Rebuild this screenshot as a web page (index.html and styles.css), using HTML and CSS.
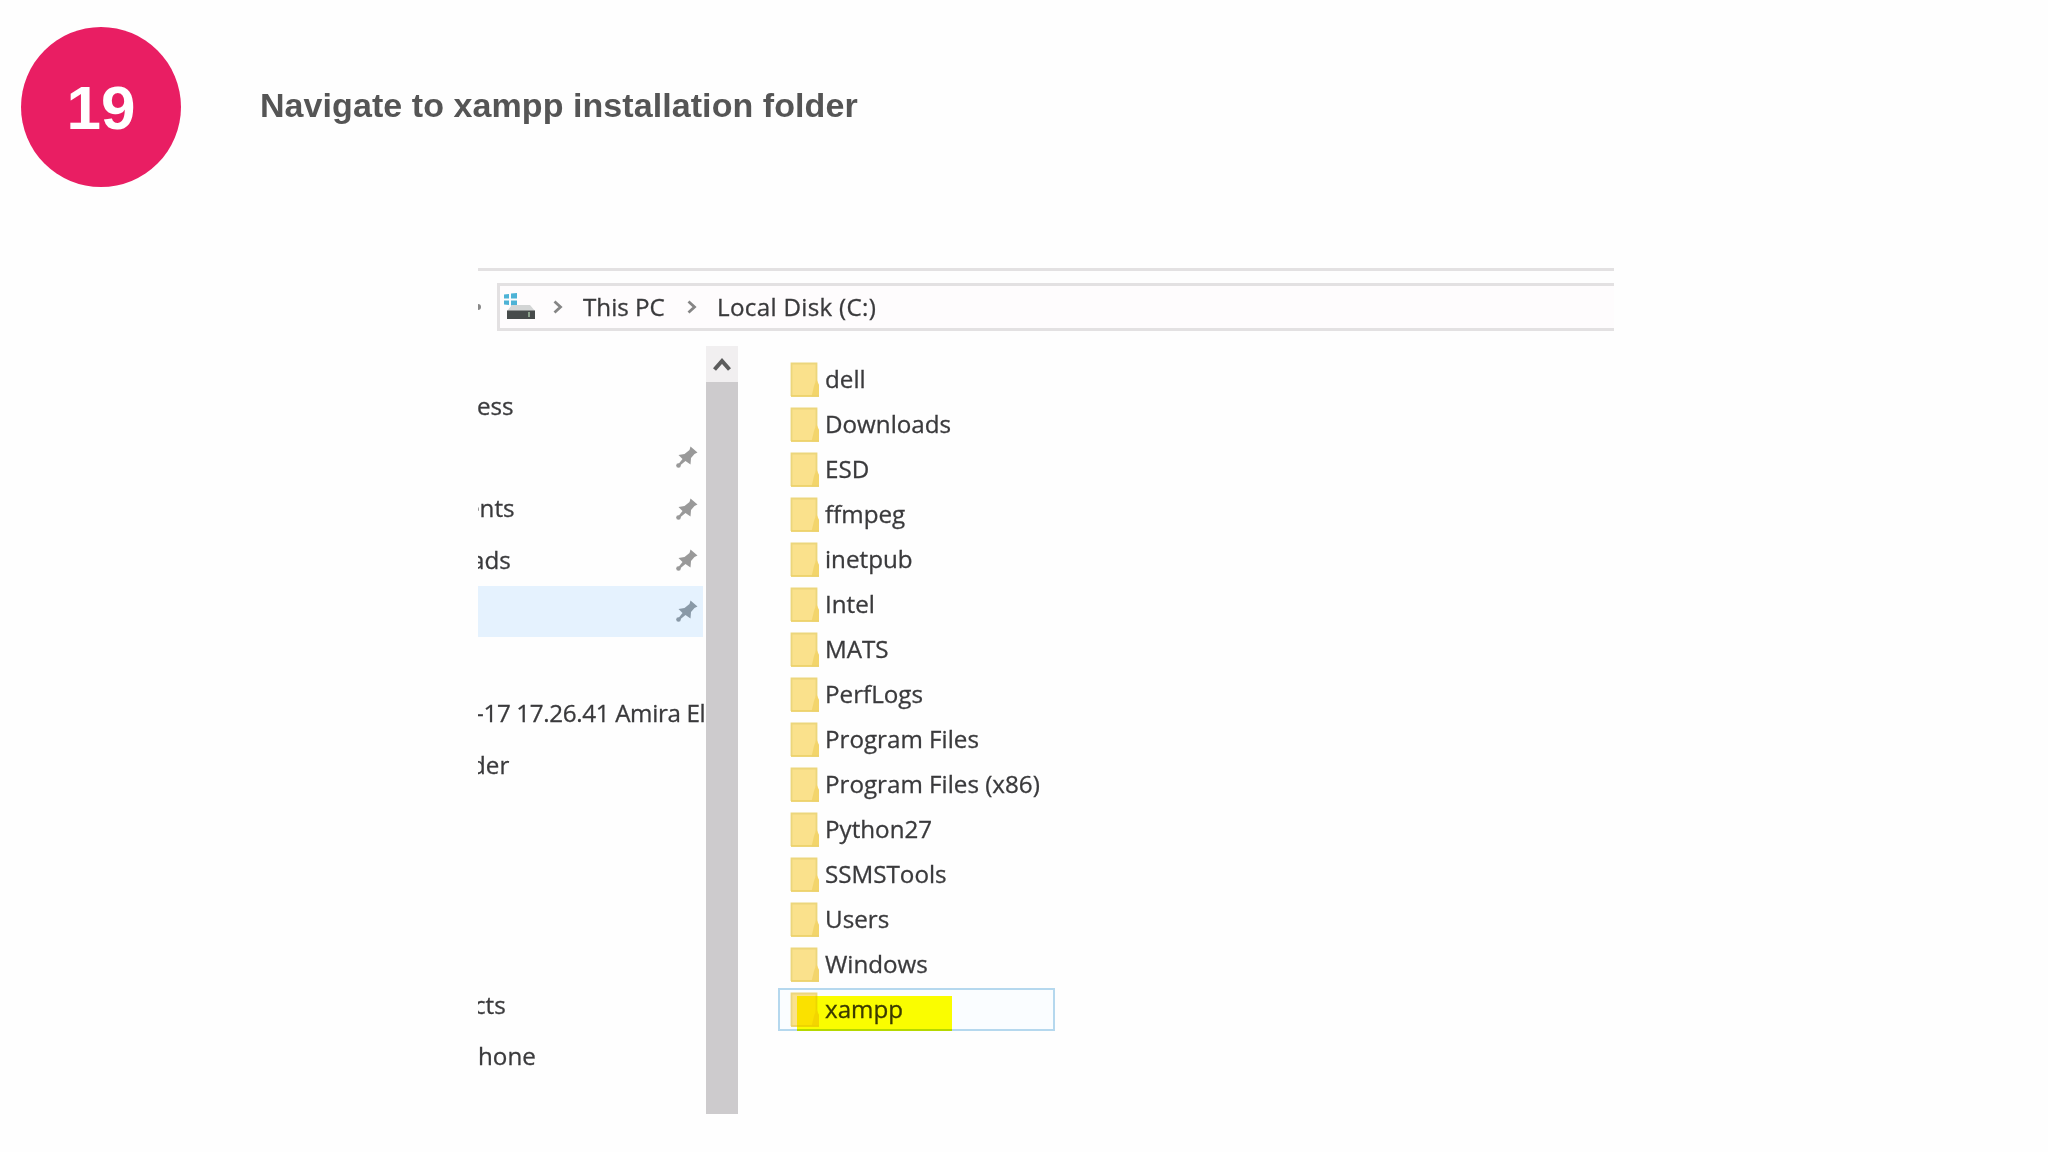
FILE: index.html
```
<!DOCTYPE html>
<html lang="en">

<head>
    <meta charset="UTF-8">
    <meta name="viewport" content="width=device-width, initial-scale=1.0">
    <title>Navigate to xampp installation folder</title>
    <link rel="stylesheet" href="styles.css">
</head>

<body>
    <!-- shared icons -->
    <svg class="sprite" width="0" height="0">
        <symbol id="pin" viewBox="0 0 22 22">
            <path d="M14.500 0.500L21.500 6.500L18.500 8L15 12L14.500 18.500L9.500 15L4 19.500L2.500 18L6.500 13L2.500 9L8.500 8L13.500 4Z" fill="currentColor" />
            <circle cx="2.500" cy="19.500" r="2.300" fill="currentColor" />
        </symbol>
        <symbol id="folder" viewBox="0 0 30 36">
            <path d="M1 1H27V21L29 23V34H1Z" fill="#fae18c" />
            <path d="M1.500 34V1.500H26.500V20" fill="none" stroke="#ecd67c" stroke-width="1.800" />
            <path d="M26.500 17L29 23V34.500H21.500L24 24Z" fill="#f3d56c" />
            <path d="M1 34H29" stroke="#ecd26a" stroke-width="1.800" />
        </symbol>
        <symbol id="arrow" viewBox="0 0 10 14">
            <path d="M1.500 1.500L7.500 7L1.500 12.500" fill="none" stroke="#858585" stroke-width="2.800" />
        </symbol>
    </svg>

    <header class="header">
        <div class="num">19</div>
        <h1 class="title">Navigate to xampp installation folder</h1>
    </header>

    <main class="explorer">
        <div class="address">
            <i class="dot"></i>
            <div class="path">
                <svg class="disk" width="34" height="28" viewBox="0 0 34 28">
                    <path d="M1 2.500L6 2V6.500H1ZM8 1.500L14 1V6.500H8ZM1 8.500H6V13L1 12.500ZM8 8.500H14V14L8 13.500Z" fill="#4db3d6" />
                    <path d="M9 13H27L32 19H4Z" fill="#d3d5d5" />
                    <path d="M4 18.500H32V27H4Z" fill="#474b4b" />
                    <path d="M26 20V25" stroke="#8aa08a" stroke-width="2" />
                </svg>
                <svg class="arrow" width="10" height="14"><use href="#arrow" /></svg>
                <span class="pc">This PC</span>
                <svg class="arrow" width="10" height="14"><use href="#arrow" /></svg>
                <span class="drive">Local Disk (C:)</span>
            </div>
        </div>

        <div class="content">
            <ul class="side">
                <li><span class="ess">ess</span></li>
                <li><svg class="pin"><use href="#pin" /></svg></li>
                <li><span class="ents">ents</span><svg class="pin"><use href="#pin" /></svg></li>
                <li><span class="ads">ads</span><svg class="pin"><use href="#pin" /></svg></li>
                <li class="active"><svg class="pin"><use href="#pin" /></svg></li>
                <li></li>
                <li><span class="rec">-17 17.26.41 Amira El</span></li>
                <li><span class="der">der</span></li>
                <li class="space"></li>
                <li><span class="cts">cts</span></li>
                <li><span class="hone">hone</span></li>
            </ul>

            <div class="scroll">
                <div class="up">
                    <svg width="18" height="14" viewBox="0 0 18 14">
                        <path d="M1.500 12.500L9 4L16.500 12.500" fill="none" stroke="#5c5c5c" stroke-width="4" />
                    </svg>
                </div>
                <div class="thumb"></div>
            </div>

            <ul class="files">
                <li><svg class="folder"><use href="#folder" /></svg><span>dell</span></li>
                <li><svg class="folder"><use href="#folder" /></svg><span>Downloads</span></li>
                <li><svg class="folder"><use href="#folder" /></svg><span>ESD</span></li>
                <li><svg class="folder"><use href="#folder" /></svg><span>ffmpeg</span></li>
                <li><svg class="folder"><use href="#folder" /></svg><span>inetpub</span></li>
                <li><svg class="folder"><use href="#folder" /></svg><span>Intel</span></li>
                <li><svg class="folder"><use href="#folder" /></svg><span>MATS</span></li>
                <li><svg class="folder"><use href="#folder" /></svg><span>PerfLogs</span></li>
                <li><svg class="folder"><use href="#folder" /></svg><span>Program Files</span></li>
                <li><svg class="folder"><use href="#folder" /></svg><span>Program Files (x86)</span></li>
                <li><svg class="folder"><use href="#folder" /></svg><span>Python27</span></li>
                <li><svg class="folder"><use href="#folder" /></svg><span>SSMSTools</span></li>
                <li><svg class="folder"><use href="#folder" /></svg><span>Users</span></li>
                <li><svg class="folder"><use href="#folder" /></svg><span>Windows</span></li>
                <li class="selected"><svg class="folder"><use href="#folder" /></svg><span>xampp</span><i class="marker"></i></li>
            </ul>
        </div>
    </main>
</body>

</html>
```
FILE: styles.css
```
* {
    box-sizing: border-box;
}

body {
    margin: 0;
    height: 1152px;
    overflow: hidden;
    background: #fefefe;
}

ul {
    margin: 0;
    padding: 0;
    list-style: none;
}

svg {
    display: block;
    flex-shrink: 0;
}

.sprite {
    position: absolute;
}

.header {
    display: flex;
    align-items: center;
    height: 268px;
    padding: 27px 0 81px 21px;
    font-family: "Liberation Sans", Arial, sans-serif;
}

.num {
    width: 160px;
    height: 160px;
    border-radius: 50%;
    background: #e91e63;
    color: #fff;
    font-size: 62px;
    font-weight: bold;
    line-height: 162px;
    text-align: center;
}

.title {
    margin: 0 0 5px 79px;
    color: #555;
    font-size: 34px;
    font-weight: bold;
    line-height: 40px;
    letter-spacing: 0.070px;
    white-space: nowrap;
}

.explorer {
    width: 1136px;
    height: 846px;
    margin-left: 478px;
    border-top: 3px solid #e3e1e2;
    overflow: hidden;
    font-family: "Open Sans", "Noto Sans", sans-serif;
    font-size: 24.200px;
    color: #3a3a3c;
    -webkit-text-stroke: 0.300px #3a3a3c;
    white-space: nowrap;
}

.explorer span {
    padding-bottom: 2px;
}

.address {
    display: flex;
    align-items: center;
    height: 60px;
    padding-top: 12px;
}

.dot {
    width: 3px;
    height: 6px;
    margin-right: 16px;
    border-radius: 0 3px 3px 0;
    background: #888;
}

.path {
    display: flex;
    flex: 1;
    align-items: center;
    height: 48px;
    border: 3px solid #e3e1e2;
    border-right: none;
    background: #fefcfd;
}

.disk {
    margin: 0 16px 2px 3px;
}

.pc {
    width: 83px;
    margin: 0 21px 0 20px;
}

.drive {
    margin-left: 20px;
    letter-spacing: 0.300px;
}

.content {
    display: flex;
    height: 783px;
    padding-top: 15px;
}

.side {
    width: 228px;
    padding-top: 34.500px;
    overflow: hidden;
}

.side li {
    display: flex;
    align-items: center;
    width: 225px;
    height: 51.300px;
}

.side .space {
    height: 188.500px;
}

.side .active {
    background: #e5f2fe;
}

/* names cut off by the left edge */
.ess {
    margin-left: -1px;
}

.ents {
    margin-left: -12px;
}

.ads {
    margin-left: -7px;
}

.der {
    margin-left: -7px;
}

.cts {
    margin-left: -4px;
}

.rec {
    margin-left: -2px;
    letter-spacing: -0.350px;
}

.pin {
    width: 22px;
    height: 22px;
    margin: 0 5px 0 auto;
    color: #999;
}

.active .pin {
    color: #8999a7;
}

.scroll {
    width: 32px;
    background: #cdcbcd;
}

.up {
    display: flex;
    align-items: center;
    justify-content: center;
    height: 36px;
    background: #f1eff0;
}

.files {
    padding: 11px 0 0 40px;
}

.files li {
    display: flex;
    align-items: center;
    width: 277px;
    height: 45px;
    padding-left: 12px;
}

.folder {
    width: 30px;
    height: 36px;
    margin-right: 5px;
}

.files .selected {
    position: relative;
    height: 43px;
    margin-top: 1px;
    padding-left: 10px;
    border: 2px solid #b5d8ee;
    background: #fafdff;
}

/* yellow marker drawn over the selected row */
.marker {
    position: absolute;
    left: 17px;
    top: 6px;
    width: 155px;
    height: 35px;
    background: #ff0;
    mix-blend-mode: multiply;
}
```
